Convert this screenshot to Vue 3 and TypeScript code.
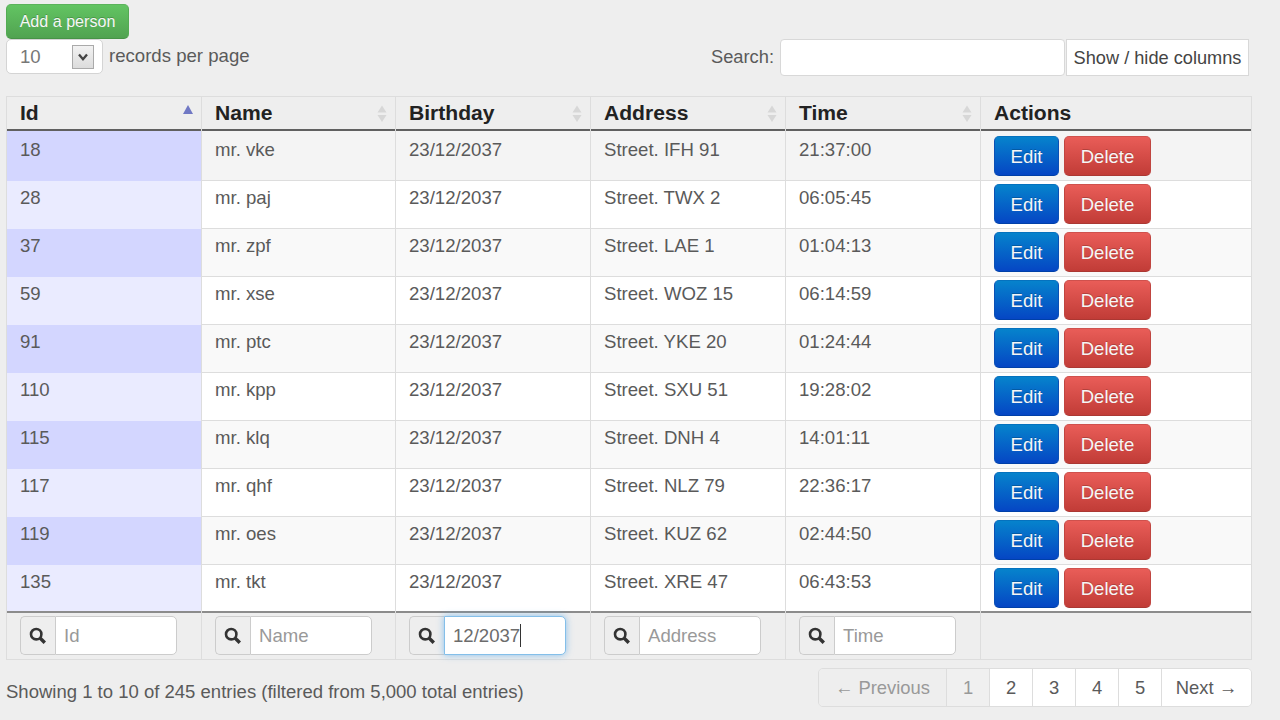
<script setup lang="ts">
interface Person {
  id: number
  name: string
  address: string
  time: string
}

interface Filter {
  label: string
  value: string
  focused: boolean
}

const columns: string[] = ['Id', 'Name', 'Birthday', 'Address', 'Time']
const birthday = '23/12/2037'

const people: Person[] = [
  { id: 18, name: 'mr. vke', address: 'Street. IFH 91', time: '21:37:00' },
  { id: 28, name: 'mr. paj', address: 'Street. TWX 2', time: '06:05:45' },
  { id: 37, name: 'mr. zpf', address: 'Street. LAE 1', time: '01:04:13' },
  { id: 59, name: 'mr. xse', address: 'Street. WOZ 15', time: '06:14:59' },
  { id: 91, name: 'mr. ptc', address: 'Street. YKE 20', time: '01:24:44' },
  { id: 110, name: 'mr. kpp', address: 'Street. SXU 51', time: '19:28:02' },
  { id: 115, name: 'mr. klq', address: 'Street. DNH 4', time: '14:01:11' },
  { id: 117, name: 'mr. qhf', address: 'Street. NLZ 79', time: '22:36:17' },
  { id: 119, name: 'mr. oes', address: 'Street. KUZ 62', time: '02:44:50' },
  { id: 135, name: 'mr. tkt', address: 'Street. XRE 47', time: '06:43:53' },
]

const filters: Filter[] = columns.map((label) => ({
  label,
  value: label === 'Birthday' ? '12/2037' : '',
  focused: label === 'Birthday',
}))

const pages: number[] = [1, 2, 3, 4, 5]
</script>

<template>
  <main class="page">
    <button class="btn add">Add a person</button>

    <div class="toolbar">
      <div class="length">
        <div class="select">
          <span>10</span>
          <span class="drop">
            <svg width="12" height="10" viewBox="0 0 12 10"><path d="M2 2.5 6 7.3 10 2.5" fill="none" stroke="#444" stroke-width="2.3" /></svg>
          </span>
        </div>
        <span class="length-label">records per page</span>
      </div>
      <div class="search">
        <span class="search-label">Search:</span>
        <div class="search-box"></div>
        <button class="toggle-cols">Show / hide columns</button>
      </div>
    </div>

    <table class="grid">
      <colgroup>
        <col class="c1" /><col class="c2" /><col class="c3" /><col class="c3" /><col class="c3" /><col class="c6" />
      </colgroup>
      <thead>
        <tr>
          <th v-for="(c, i) in columns" :key="c">
            <div class="head">
              <span>{{ c }}</span>
              <svg v-if="i === 0" class="sort active" width="12" height="20" viewBox="0 0 12 20"><path d="M6 2 11 11H1z" fill="#7078c4" /></svg>
              <svg v-else class="sort" width="12" height="20" viewBox="0 0 12 20"><path d="M6 1.5 10.5 8.5h-9zM6 18 1.5 11h9z" fill="#d7d7d7" /></svg>
            </div>
          </th>
          <th><div class="head"><span>Actions</span></div></th>
        </tr>
      </thead>
      <tbody>
        <tr v-for="p in people" :key="p.id">
          <td class="sorted">{{ p.id }}</td>
          <td>{{ p.name }}</td>
          <td>{{ birthday }}</td>
          <td>{{ p.address }}</td>
          <td>{{ p.time }}</td>
          <td class="actions">
            <div class="buttons">
              <button class="btn edit">Edit</button>
              <button class="btn delete">Delete</button>
            </div>
          </td>
        </tr>
      </tbody>
      <tfoot>
        <tr>
          <td v-for="f in filters" :key="f.label">
            <div class="filter">
              <span class="addon">
                <svg width="18" height="18" viewBox="0 0 18 18" fill="none" stroke="#333"><circle cx="7.2" cy="7.2" r="5.2" stroke-width="2.6" /><path d="M11 11 15.8 15.8" stroke-width="3.4" /></svg>
              </span>
              <span class="field" :class="{ focused: f.focused }">
                <span v-if="f.value" class="value">{{ f.value }}</span>
                <span v-else class="placeholder">{{ f.label }}</span>
                <i v-if="f.focused" class="caret"></i>
              </span>
            </div>
          </td>
          <td></td>
        </tr>
      </tfoot>
    </table>

    <footer class="bottom">
      <div class="info">Showing 1 to 10 of 245 entries (filtered from 5,000 total entries)</div>
      <nav class="pager">
        <a class="prev off">← Previous</a>
        <a v-for="n in pages" :key="n" class="num" :class="{ off: n === 1 }">{{ n }}</a>
        <a class="next">Next →</a>
      </nav>
    </footer>
  </main>
</template>

<style>
body {
  margin: 0;
  background: #eeeeee;
}
</style>

<style scoped>
.page {
  box-sizing: border-box;
  width: 1280px;
  height: 720px;
  padding: 4px 28px 0 6px;
  overflow: hidden;
  background: #eeeeee;
  color: #5a5a5a;
  font-family: "Liberation Sans", Arial, sans-serif;
  font-size: 18.6px;
  line-height: 24px;
}
.page * {
  box-sizing: border-box;
}
button {
  font-family: inherit;
  margin: 0;
  padding: 0;
}
.btn {
  display: block;
  border: 1px solid;
  border-radius: 5px;
  color: #f6f6f6;
  text-align: center;
  text-shadow: 0 -1px 0 rgba(0, 0, 0, 0.2);
}
.add {
  width: 123px;
  height: 35px;
  border-color: #5bb35b #53ab53 #479347;
  background: linear-gradient(#62c462, #51a351);
  font-size: 16.1px;
  line-height: 31px;
}
.toolbar {
  display: flex;
  justify-content: space-between;
  height: 57px;
}
.length,
.search {
  display: flex;
}
.select {
  display: flex;
  align-items: center;
  justify-content: space-between;
  width: 97px;
  height: 35px;
  padding: 0 8px 0 13px;
  border: 1px solid #d4d4d4;
  border-radius: 5px;
  background: #fff;
  color: #777;
}
.drop {
  display: flex;
  align-items: center;
  justify-content: center;
  width: 22px;
  height: 24px;
  border: 1px solid #aaa;
  background: linear-gradient(#f2f2f2, #dcdcdc);
}
.length-label {
  padding: 5px 0 0 6px;
}
.search {
  margin-right: 3px;
}
.search-label {
  padding-top: 6px;
  margin-right: 6px;
  font-size: 18.3px;
}
.search-box {
  width: 285px;
  height: 37px;
  margin-right: 1px;
  border: 1px solid #d8d8d8;
  border-radius: 4px;
  background: #fff;
}
.toggle-cols {
  width: 183px;
  height: 37px;
  border: 1px solid #d8d8d8;
  background: #fff;
  color: #444;
  font-size: 18.2px;
  padding-top: 1px;
}
.grid {
  width: 1246px;
  table-layout: fixed;
  border-collapse: separate;
  border-spacing: 0;
}
.c1 { width: 195px; }
.c2 { width: 194px; }
.c3 { width: 195px; }
.c6 { width: 272px; }
th,
td {
  padding: 0 0 0 13px;
  border-left: 1px solid #dddddd;
  text-align: left;
  vertical-align: top;
}
tr > :last-child {
  border-right: 1px solid #dddddd;
}
th {
  height: 35px;
  border-top: 1px solid #dddddd;
  box-shadow: inset 0 -2px 0 #606060;
  color: #222;
  font-size: 21.1px;
}
.head {
  display: flex;
  justify-content: space-between;
  height: 34px;
  line-height: 32px;
}
.sort {
  margin: 7px 7px 0 0;
}
.sort.active {
  margin-top: 6px;
}
tbody td {
  height: 48px;
  padding-top: 5px;
  border-bottom: 1px solid #dddddd;
  background: #fff;
}
tbody tr:nth-child(odd) td {
  background: #f9f9f9;
}
tbody tr:first-child td {
  height: 50px;
  padding-top: 7px;
  background: #f4f4f4;
}
tbody tr td.sorted {
  border-bottom: 0;
  background: #eaebff;
}
tbody tr:nth-child(odd) td.sorted {
  background: #d3d6ff;
}
tbody tr td.actions {
  padding-top: 3px;
}
tbody tr:first-child td.actions {
  padding-top: 5px;
}
tbody tr:last-child td {
  height: 46px;
  border-bottom: 0;
}
.buttons {
  display: flex;
  gap: 5px;
}
.buttons .btn {
  height: 40px;
  font-size: 18.5px;
  line-height: 38px;
  padding-top: 1px;
}
.edit {
  width: 65px;
  border-color: #0572be #0b50b5 #0040a8;
  background: linear-gradient(#0683cc, #0546c4);
}
.delete {
  width: 87px;
  border-color: #cf514d #c04540 #ab3833;
  background: linear-gradient(#e95d58, #c13c37);
}
tfoot td {
  height: 49px;
  padding-top: 5px;
  border-bottom: 1px solid #dddddd;
  box-shadow: inset 0 2px 0 #8c8c8c;
}
.filter {
  display: flex;
  width: 157px;
  height: 39px;
}
.addon {
  display: flex;
  align-items: center;
  justify-content: center;
  width: 35px;
  border: 1px solid #cccccc;
  border-right: 0;
  border-radius: 5px 0 0 5px;
}
.field {
  display: flex;
  align-items: center;
  flex: 1;
  padding-left: 8px;
  border: 1px solid #cccccc;
  border-radius: 0 5px 5px 0;
  background: #fff;
}
.field.focused {
  border-color: #84bfe9;
  box-shadow: 0 0 7px rgba(82, 168, 236, 0.65);
}
.value {
  color: #6c6c6c;
}
.placeholder {
  color: #999;
}
.caret {
  width: 1px;
  height: 23px;
  background: #333;
}
.bottom {
  display: flex;
  justify-content: space-between;
  padding-top: 8px;
}
.info {
  padding-top: 12px;
  font-size: 18.52px;
}
.pager {
  display: flex;
  height: 39px;
  border: 1px solid #dddddd;
  border-radius: 5px;
  overflow: hidden;
  font-size: 18.4px;
}
.pager a {
  width: 43px;
  border-left: 1px solid #dddddd;
  background: #fff;
  line-height: 37px;
  text-align: center;
}
.pager a.off {
  background: #f0f0f0;
  color: #999;
}
.pager a.prev {
  width: 127px;
  border-left: 0;
  background: #eeeeee;
}
.pager a.next {
  width: 90px;
}
</style>
